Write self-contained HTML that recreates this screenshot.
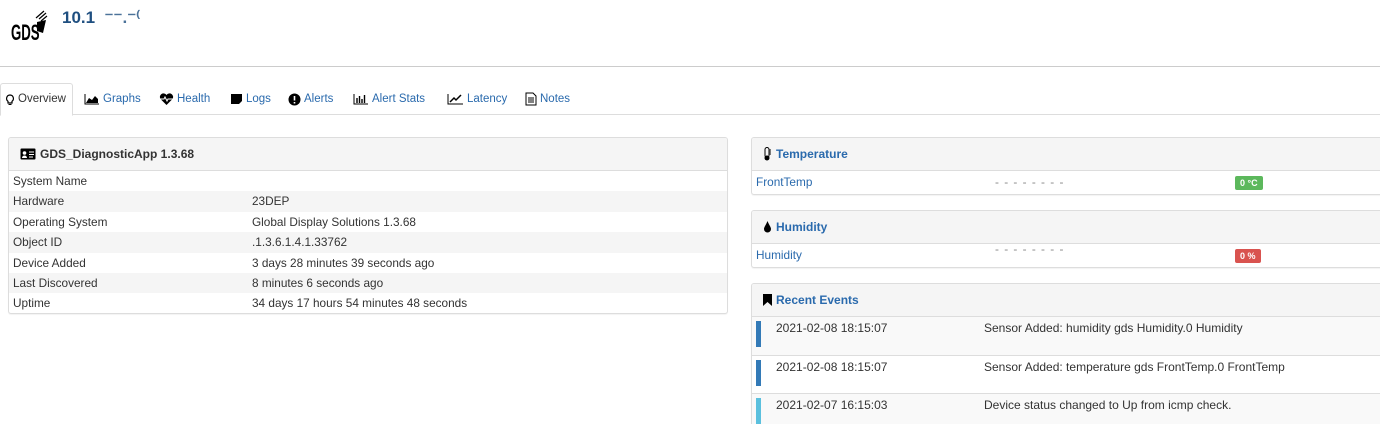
<!DOCTYPE html>
<html><head><style>
*{box-sizing:border-box;margin:0;padding:0}
html,body{width:1380px;height:424px;overflow:hidden}
body{background:#fff;font-family:"Liberation Sans",Arial,sans-serif;font-size:11.8px;color:#333;position:relative}
.abs{position:absolute}
a{color:#2a6aad;text-decoration:none}
.hdr{border-bottom:1px solid #ccc;height:67px;position:absolute;left:0;top:0;width:1380px}
.title{left:62px;top:8px;font-size:17px;font-weight:bold;color:#1f4f80}
.tabs{top:83px;left:0;width:1380px;height:32px;border-bottom:1px solid #ddd}
.tab{position:absolute;top:0;height:32px;line-height:31px;font-size:11.5px;color:#2a6aad;display:flex;align-items:center;gap:3px}
.tab.act{border:1px solid #ddd;border-bottom:1px solid #fff;border-radius:3px 3px 0 0;color:#333;background:#fff;height:33px;padding:0 6px 0 4px}
.panel{position:absolute;border:1px solid #ddd;border-radius:3px;background:#fff;box-shadow:0 1px 1px rgba(0,0,0,.05);overflow:hidden}
.ph{background:#f5f5f5;border-bottom:1px solid #ddd;height:33px;display:flex;align-items:center;padding-left:11px;font-weight:bold;font-size:12px;gap:4px}
.row{height:20.4px;line-height:20px;position:relative;padding-left:4px}
.row:nth-child(even){background:#f5f5f5}
.row span{position:absolute;left:243px}
.badge{position:absolute;left:483px;top:5px;color:#fff;font-weight:bold;font-size:9px;padding:1px 5px;border-radius:2px;line-height:12px}
.ev{height:38px;border-top:1px solid #ddd;position:relative;font-size:12px}
.ev .bar{position:absolute;left:4px;top:4px;width:5px;height:26px}
.ev .t{position:absolute;left:24px;top:4px}
.ev .m{position:absolute;left:232px;top:4px}
</style></head><body>
<div class="hdr"></div>
<svg class="abs" style="left:11px;top:10px" width="40" height="34" viewBox="0 0 40 34"><text x="0" y="30" font-family="Liberation Sans" font-weight="bold" font-size="22" fill="#000" transform="scale(0.6,1)">GDS</text><path d="M25 8l8-7M28 9l7-6M30 11l6-5" stroke="#000" stroke-width="1.2"/><path d="M26 12l9-2-3 13-6-2z" fill="#000"/></svg>
<div class="abs title">10.1<span style="opacity:.8">&nbsp; ⁻⁻.⁻⁽</span></div>
<div class="abs tabs">
<div class="tab act" style="left:0"><svg width="10" height="12" viewBox="0 0 10 12"><path d="M5 1a3.5 3.5 0 0 0-2 6.3V9h4V7.3A3.5 3.5 0 0 0 5 1z" fill="none" stroke="#000" stroke-width="1.2"/><path d="M3.5 10.5h3" stroke="#000"/></svg>Overview</div>
<div class="tab" style="left:84px"><svg width="16" height="12"><path d="M1 1v10h14" stroke="#000" fill="none"/><path d="M2 10l3-5 3 2 3-4 3 3v4z" fill="#000"/></svg>Graphs</div>
<div class="tab" style="left:159px"><svg width="15" height="13" viewBox="0 0 15 13"><path d="M7.5 12L1.5 6A3.3 3.3 0 0 1 7.5 2a3.3 3.3 0 0 1 6 4z" fill="#000"/><path d="M1 6h4l1-2 2 4 1-2h5" stroke="#fff" fill="none"/></svg>Health</div>
<div class="tab" style="left:230px"><svg width="13" height="12"><path d="M1 1h11v7l-3 3H1z" fill="#000"/></svg>Logs</div>
<div class="tab" style="left:288px"><svg width="13" height="13"><circle cx="6.5" cy="6.5" r="6" fill="#000"/><path d="M6.5 3v4.5M6.5 9v1.5" stroke="#fff" stroke-width="1.6"/></svg>Alerts</div>
<div class="tab" style="left:353px"><svg width="16" height="12"><path d="M1 1v10h14" stroke="#000" fill="none"/><path d="M4 5v5M6.5 3v7M9 6v4M11.5 2v8" stroke="#000" stroke-width="1.4"/></svg>Alert Stats</div>
<div class="tab" style="left:447px"><svg width="17" height="12"><path d="M1 1v10h15" stroke="#000" fill="none"/><path d="M3 9l4-4 2 2 5-5" stroke="#000" stroke-width="1.5" fill="none"/></svg>Latency</div>
<div class="tab" style="left:525px"><svg width="12" height="14"><path d="M1 1h7l3 3v9H1z" fill="none" stroke="#000"/><path d="M3 6h6M3 8h6M3 10h6" stroke="#000"/></svg>Notes</div>
</div>

<div class="panel" style="left:8px;top:137px;width:720px;height:177px">
<div class="ph"><svg width="16" height="12"><rect x="0.5" y="0.5" width="15" height="11" rx="1" fill="#000"/><circle cx="4.5" cy="5" r="1.8" fill="#fff"/><path d="M2 10a2.5 2.5 0 0 1 5 0z" fill="#fff"/><path d="M9 4h5M9 6.5h5M9 9h4" stroke="#fff"/></svg>GDS_DiagnosticApp 1.3.68</div>
<div>
<div class="row">System Name</div>
<div class="row">Hardware<span>23DEP</span></div>
<div class="row">Operating System<span>Global Display Solutions 1.3.68</span></div>
<div class="row">Object ID<span>.1.3.6.1.4.1.33762</span></div>
<div class="row">Device Added<span>3 days 28 minutes 39 seconds ago</span></div>
<div class="row">Last Discovered<span>8 minutes 6 seconds ago</span></div>
<div class="row">Uptime<span>34 days 17 hours 54 minutes 48 seconds</span></div>
</div></div>

<div class="panel" style="left:751px;top:137px;width:640px;height:58px">
<div class="ph"><svg width="9" height="14"><rect x="2" y="0.5" width="4" height="10" rx="2" fill="none" stroke="#000"/><circle cx="4" cy="11" r="2.5" fill="#000"/><path d="M6 3h2M6 5h2M6 7h2" stroke="#000"/></svg><a>Temperature</a></div>
<div style="position:relative;height:24px;line-height:22px;padding-left:4px"><a>FrontTemp</a><span style="position:absolute;left:243px;color:#888;letter-spacing:1px">- - - - - - - -</span><span class="badge" style="background:#5cb85c">0 °C</span></div>
</div>

<div class="panel" style="left:751px;top:210px;width:640px;height:58px">
<div class="ph"><svg width="9" height="12"><path d="M4.5 0C3 4 1 6 1 8a3.5 3.5 0 0 0 7 0C8 6 6 4 4.5 0z" fill="#000"/></svg><a>Humidity</a></div>
<div style="position:relative;height:24px;line-height:22px;padding-left:4px"><a>Humidity</a><span style="position:absolute;left:243px;top:-6px;color:#888;letter-spacing:1px">- - - - - - - -</span><span class="badge" style="background:#d9534f">0 %</span></div>
</div>

<div class="panel" style="left:751px;top:283px;width:640px;height:150px">
<div class="ph"><svg width="9" height="12"><path d="M0 0h9v12L4.5 8 0 12z" fill="#000"/></svg><a>Recent Events</a></div>
<div class="ev" style="background:#f9f9f9;border-top:0"><div class="bar" style="background:#337ab7"></div><div class="t">2021-02-08 18:15:07</div><div class="m">Sensor Added: humidity gds Humidity.0 Humidity</div></div>
<div class="ev"><div class="bar" style="background:#337ab7"></div><div class="t">2021-02-08 18:15:07</div><div class="m">Sensor Added: temperature gds FrontTemp.0 FrontTemp</div></div>
<div class="ev" style="background:#f9f9f9"><div class="bar" style="background:#5bc0de"></div><div class="t">2021-02-07 16:15:03</div><div class="m">Device status changed to Up from icmp check.</div></div>
</div>
</body></html>
